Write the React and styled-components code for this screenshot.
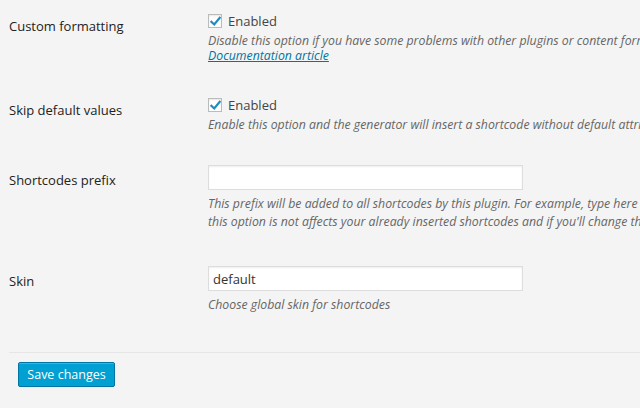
import React from 'react'
import styled, { createGlobalStyle } from 'styled-components'

const GlobalStyle = createGlobalStyle`
  html, body {
    margin: 0;
    padding: 0;
    background: #f4f4f4;
  }
  body {
    font-family: 'Open Sans', 'Liberation Sans', sans-serif;
    font-size: 13px;
    color: #222;
    overflow: hidden;
  }
`

const Page = styled.div`
  width: 640px;
  height: 408px;
  padding-left: 9px;
  box-sizing: border-box;
  overflow: hidden;
`

const Row = styled.div`
  display: grid;
  grid-template-columns: 199px 1fr;
  padding: ${p => p.$top}px 0 ${p => p.$bottom}px;
`

const Label = styled.div`
  padding-top: 6px;
  line-height: 18px;
  color: #222;
  white-space: nowrap;
`

const Field = styled.div`
  min-width: 0;
  white-space: nowrap;
`

const CheckLine = styled.label`
  display: flex;
  align-items: flex-start;
  height: 20px;
  line-height: 20px;
  color: #444;
  cursor: pointer;
`

const Box = styled.span`
  box-sizing: border-box;
  width: 14px;
  height: 14px;
  margin: 3px 6px 0 0;
  border: 1px solid #bbb;
  background: #fff;
  box-shadow: inset 0 1px 2px rgba(0, 0, 0, 0.1);
  display: flex;
  align-items: center;
  justify-content: center;
  svg {
    width: 11px;
    height: 11px;
    margin-top: 1px;
  }
`

const Desc = styled.p`
  margin: ${p => p.$gap}px 0 0;
  font-size: 12.3px;
  font-style: italic;
  line-height: ${p => (p.$tight ? 15 : 18)}px;
  color: #666;
`

const DocLink = styled.a`
  color: #0074a2;
  text-decoration: underline;
`

const TextInput = styled.input`
  box-sizing: border-box;
  display: block;
  width: 315px;
  height: 25px;
  margin: 0;
  padding: 0 4px;
  border: 1px solid #ddd;
  background: #fff;
  box-shadow: inset 0 1px 2px rgba(0, 0, 0, 0.07);
  font-family: 'Open Sans', 'Liberation Sans', sans-serif;
  font-size: 13px;
  color: #333;
  outline: none;
`

const Footer = styled.div`
  border-top: 1px solid #e6e6e6;
  padding: 9px 9px;
`

const PrimaryButton = styled.button`
  box-sizing: border-box;
  width: 97px;
  height: 25px;
  padding: 0 0 1px;
  border: 1px solid #0074a2;
  border-radius: 2px;
  background: #00a0d2;
  box-shadow: inset 0 1px 0 rgba(120, 200, 230, 0.5);
  font-family: 'Open Sans', 'Liberation Sans', sans-serif;
  font-size: 12.5px;
  white-space: nowrap;
  color: #fff;
  cursor: pointer;
`

const Check = () => (
  <Box>
    <svg viewBox="0 0 12 12">
      <path d="M1.5 6.3 L4.6 9.2 L10.6 2" fill="none" stroke="#1e8cbe" strokeWidth="2.4" strokeLinecap="square" />
    </svg>
  </Box>
)

export default function App() {
  return (
    <Page>
      <GlobalStyle />
      <Row $top={11} $bottom={21}>
        <Label>Custom formatting</Label>
        <Field>
          <CheckLine>
            <Check />
            Enabled
          </CheckLine>
          <Desc $tight $gap={2}>
            Disable this option if you have some problems with other plugins or content formatting
            <br />
            <DocLink href="#">Documentation article</DocLink>
          </Desc>
        </Field>
      </Row>
      <Row $top={11} $bottom={20}>
        <Label>Skip default values</Label>
        <Field>
          <CheckLine>
            <Check />
            Enabled
          </CheckLine>
          <Desc $gap={1}>
            Enable this option and the generator will insert a shortcode without default attributes
          </Desc>
        </Field>
      </Row>
      <Row $top={11} $bottom={24}>
        <Label>Shortcodes prefix</Label>
        <Field>
          <TextInput type="text" defaultValue="" />
          <Desc $gap={5}>
            This prefix will be added to all shortcodes by this plugin. For example, type here su_ and you'll get
            <br />
            this option is not affects your already inserted shortcodes and if you'll change this value
          </Desc>
        </Field>
      </Row>
      <Row $top={11} $bottom={38}>
        <Label>Skin</Label>
        <Field>
          <TextInput type="text" defaultValue="default" />
          <Desc $gap={5}>Choose global skin for shortcodes</Desc>
        </Field>
      </Row>
      <Footer>
        <PrimaryButton>Save changes</PrimaryButton>
      </Footer>
    </Page>
  )
}
